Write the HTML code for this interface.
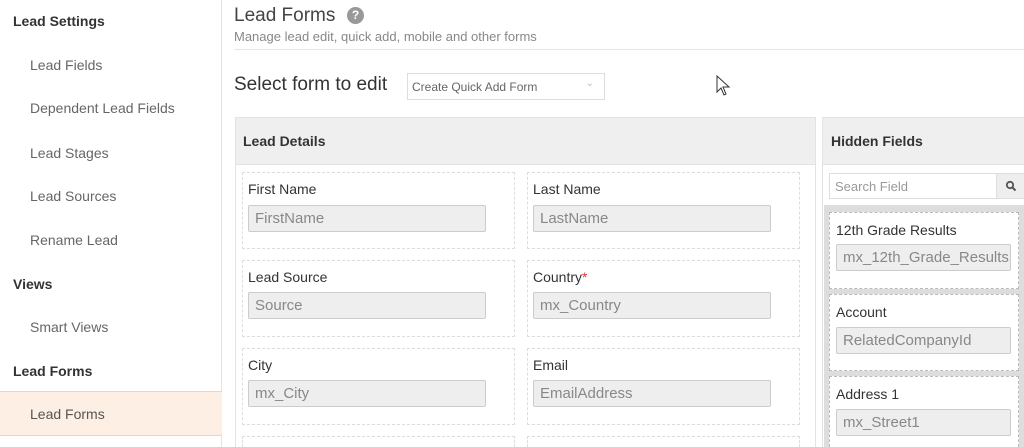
<!DOCTYPE html>
<html><head><style>
*{box-sizing:border-box;margin:0;padding:0}
html,body{width:1024px;height:447px;overflow:hidden}
body{background:#fff;font-family:"Liberation Sans",sans-serif;position:relative;color:#333}
.a{position:absolute}
.sb{left:0;top:0;width:222px;height:447px;border-right:1px solid #e3e3e3}
.h{left:13px;font-size:14px;font-weight:bold;color:#333}
.i{left:30px;font-size:14px;color:#666}
.cell{border:1px dashed #ddd;background:#fff}
.lbl{font-size:14px;color:#333}
.inp{background:#eee;border:1px solid #ccc;border-radius:2px;font-size:15px;color:#888;padding:4px 6px;height:27px}
</style></head><body>
<div class="a sb"></div>
<div class="a h" style="top:13px">Lead Settings</div>
<div class="a i" style="top:57px">Lead Fields</div>
<div class="a i" style="top:100px">Dependent Lead Fields</div>
<div class="a i" style="top:145px">Lead Stages</div>
<div class="a i" style="top:188px">Lead Sources</div>
<div class="a i" style="top:232px">Rename Lead</div>
<div class="a h" style="top:276px">Views</div>
<div class="a i" style="top:319px">Smart Views</div>
<div class="a h" style="top:363px">Lead Forms</div>
<div class="a" style="left:0;top:391px;width:222px;height:45px;background:#fdefe4;border-top:1px solid #f6d3b8;border-bottom:1px solid #f6d3b8"></div>
<div class="a i" style="top:406px;color:#555">Lead Forms</div>

<div class="a" style="left:234px;top:5px;font-size:19px;color:#444">Lead Forms</div>
<div class="a" style="left:347px;top:7px;width:17px;height:17px;border-radius:50%;background:#999;color:#fff;font-size:12px;font-weight:bold;text-align:center;line-height:17px">?</div>
<div class="a" style="left:234px;top:29px;font-size:13px;color:#888">Manage lead edit, quick add, mobile and other forms</div>
<div class="a" style="left:234px;top:49px;width:790px;height:1px;background:#e5e5e5"></div>
<div class="a" style="left:234px;top:74px;font-size:19px;color:#333">Select form to edit</div>
<div class="a" style="left:407px;top:73px;width:198px;height:27px;border:1px solid #ddd;font-size:12px;color:#666;padding:6px 4px">Create Quick Add Form<span style="position:absolute;right:10px;top:4px;color:#bbb;font-size:10px">&#8964;</span></div>
<svg class="a" style="left:716px;top:75px" width="16" height="22"><path d="M1 1 L1 17 L5 13 L8 20 L10 19 L7 12 L13 12 Z" fill="#fff" stroke="#333" stroke-width="1"/></svg>

<div class="a" style="left:235px;top:117px;width:581px;height:330px;border:1px solid #e3e3e3;border-bottom:none;background:#fff"></div>
<div class="a" style="left:236px;top:118px;width:579px;height:47px;background:#efefef;border-bottom:1px solid #e3e3e3"></div>
<div class="a" style="left:243px;top:133px;font-size:14px;font-weight:bold;color:#333">Lead Details</div>

<div class="a cell" style="left:242px;top:172px;width:273px;height:77px"></div>
<div class="a cell" style="left:527px;top:172px;width:273px;height:77px"></div>
<div class="a cell" style="left:242px;top:260px;width:273px;height:77px"></div>
<div class="a cell" style="left:527px;top:260px;width:273px;height:77px"></div>
<div class="a cell" style="left:242px;top:348px;width:273px;height:77px"></div>
<div class="a cell" style="left:527px;top:348px;width:273px;height:77px"></div>
<div class="a cell" style="left:242px;top:436px;width:273px;height:11px;border-bottom:none"></div>
<div class="a cell" style="left:527px;top:436px;width:273px;height:11px;border-bottom:none"></div>

<div class="a lbl" style="left:248px;top:181px">First Name</div>
<div class="a inp" style="left:248px;top:205px;width:238px">FirstName</div>
<div class="a lbl" style="left:533px;top:181px">Last Name</div>
<div class="a inp" style="left:533px;top:205px;width:238px">LastName</div>
<div class="a lbl" style="left:248px;top:269px">Lead Source</div>
<div class="a inp" style="left:248px;top:292px;width:238px">Source</div>
<div class="a lbl" style="left:533px;top:269px">Country<span style="color:#d33">*</span></div>
<div class="a inp" style="left:533px;top:292px;width:238px">mx_Country</div>
<div class="a lbl" style="left:248px;top:357px">City</div>
<div class="a inp" style="left:248px;top:380px;width:238px">mx_City</div>
<div class="a lbl" style="left:533px;top:357px">Email</div>
<div class="a inp" style="left:533px;top:380px;width:238px">EmailAddress</div>

<div class="a" style="left:822px;top:117px;width:210px;height:330px;border:1px solid #e3e3e3;border-bottom:none;background:#fff"></div>
<div class="a" style="left:823px;top:118px;width:210px;height:47px;background:#efefef;border-bottom:1px solid #e3e3e3"></div>
<div class="a" style="left:831px;top:133px;font-size:14px;font-weight:bold;color:#333">Hidden Fields</div>
<div class="a" style="left:829px;top:173px;width:168px;height:26px;border:1px solid #ddd;font-size:13px;color:#999;padding:5px 5px">Search Field</div>
<div class="a" style="left:996px;top:173px;width:30px;height:26px;background:#eee;border:1px solid #ddd"></div>
<svg class="a" style="left:1005px;top:180px" width="12" height="12"><circle cx="5" cy="5" r="3.2" fill="none" stroke="#555" stroke-width="1.8"/><path d="M7.5 7.5 L10.5 10.5" stroke="#555" stroke-width="2"/></svg>
<div class="a" style="left:824px;top:205px;width:200px;height:242px;background:#ddd"></div>
<div class="a cell" style="left:829px;top:212px;width:190px;height:77px;border-color:#bbb"></div>
<div class="a cell" style="left:829px;top:294px;width:190px;height:77px;border-color:#bbb"></div>
<div class="a cell" style="left:829px;top:376px;width:190px;height:71px;border-color:#bbb;border-bottom:none"></div>
<div class="a lbl" style="left:836px;top:222px">12th Grade Results</div>
<div class="a inp" style="left:836px;top:244px;width:175px">mx_12th_Grade_Results</div>
<div class="a lbl" style="left:836px;top:304px">Account</div>
<div class="a inp" style="left:836px;top:327px;width:175px">RelatedCompanyId</div>
<div class="a lbl" style="left:836px;top:386px">Address 1</div>
<div class="a inp" style="left:836px;top:409px;width:175px">mx_Street1</div>
</body></html>
